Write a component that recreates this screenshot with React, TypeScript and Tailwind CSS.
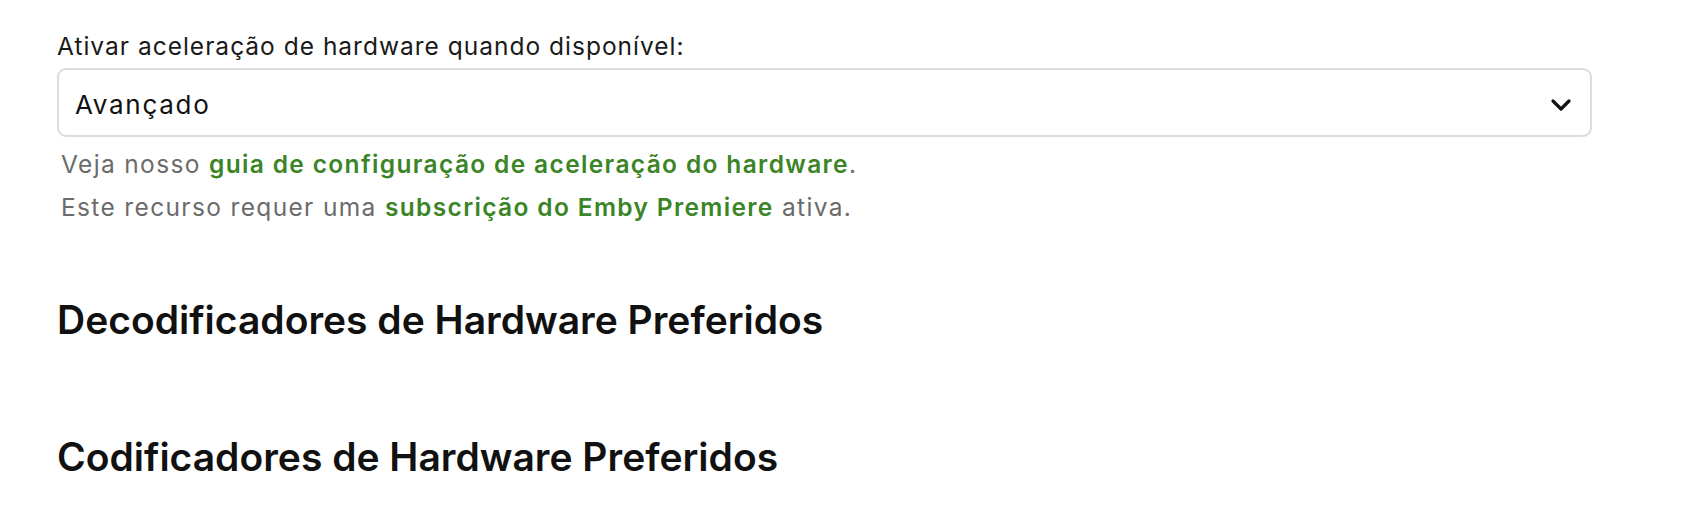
export default function App() {
  return (
    <div className="w-[1686px] h-[514px] bg-white overflow-hidden" style={{ fontFamily: 'Inter, "Noto Sans", sans-serif' }}>
      <div className="pl-[57px] pr-[94px] pt-[28px]">
        <div className="text-[24.5px] leading-[36px] tracking-[1px] text-[#1a1a1a]">Ativar aceleração de hardware quando disponível:</div>
        <div className="mt-[4px] h-[69px] border-2 border-[#dcdcdc] rounded-[9px] flex items-center justify-between pl-[16px] pr-[18px]">
          <span className="pt-[3px] text-[26px] tracking-[1.7px] text-[#111]">Avançado</span>
          <svg width="22" height="14" viewBox="0 0 22 14" fill="none" className="mt-[4px]">
            <path d="M3 3 L11 11 L19 3" stroke="#111" strokeWidth="3.2" strokeLinecap="round" strokeLinejoin="round" />
          </svg>
        </div>
        <div className="mt-[6px] pl-[4px] text-[24.5px] leading-[43px] tracking-[1.35px] text-[#6b6b6b]">
          <div>
            Veja nosso <a className="text-[#3b8527] font-semibold">guia de configuração de aceleração do hardware</a>.
          </div>
          <div>
            Este recurso requer uma <a className="text-[#3b8527] font-semibold">subscrição do Emby Premiere</a> ativa.
          </div>
        </div>
        <h2 className="mt-[67px] text-[39px] leading-[48px] font-semibold text-[#111]">Decodificadores de Hardware Preferidos</h2>
        <h2 className="mt-[89px] text-[39px] leading-[48px] font-semibold text-[#111]">Codificadores de Hardware Preferidos</h2>
      </div>
    </div>
  );
}
